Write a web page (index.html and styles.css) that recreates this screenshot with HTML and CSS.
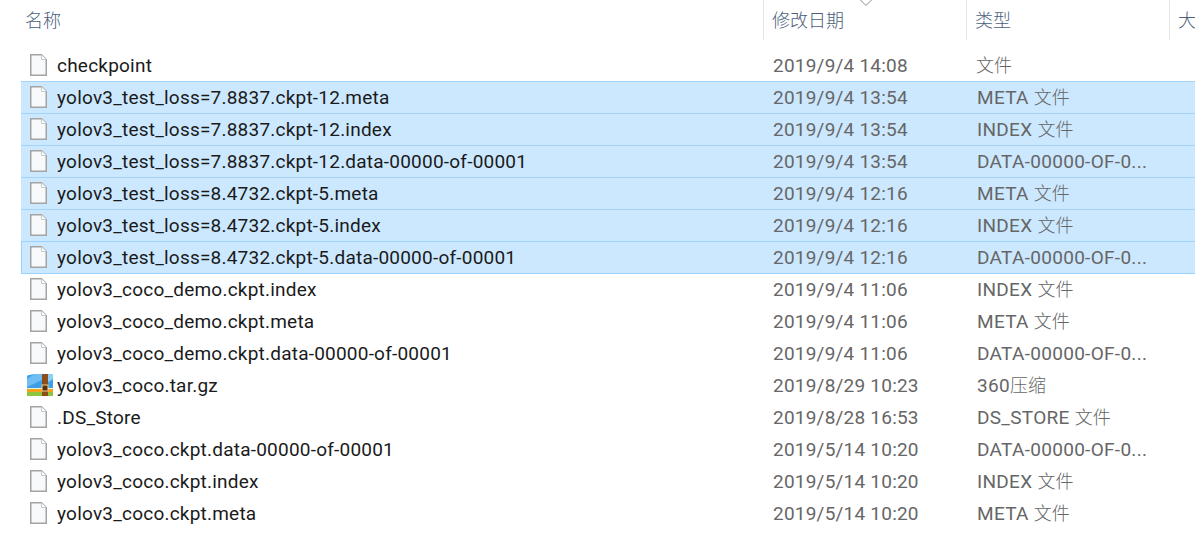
FILE: index.html
```html
<!DOCTYPE html>
<html lang="zh-CN">
<head>
  <meta charset="UTF-8">
  <title>文件列表</title>
  <link rel="stylesheet" href="styles.css">
</head>
<body>

<svg width="0" height="0" class="defs">
  <symbol id="file" viewBox="0 0 17 22">
    <path d="M.75.75H11.500L16.250 5.500V21.250H.75Z" fill="#f8f9fa" stroke="#a3a3a3" stroke-width="1.500"/>
    <path d="M11.500.75V5.500H16.250" fill="#fff" stroke="#c8c8c8"/>
  </symbol>
  <symbol id="archive" viewBox="0 0 26 22">
    <path d="M0 3Q0 1 2 1L8 0H26V14H0Z" fill="#3f9fe6"/>
    <path d="M0 5L8 0H15V6L0 13Z" fill="#6fbdf2"/>
    <path d="M18 0H26V5L20 9H18Z" fill="#8fd0f7"/>
    <rect y="14" width="26" height="1" fill="#e8f3d8"/>
    <rect y="15" width="26" height="3" fill="#f7a11a"/>
    <rect y="18" width="26" height="4" fill="#8cc63f"/>
    <rect x="15" width="6" height="22" fill="#8a4f1d"/>
    <rect x="15" y="11" width="6" height="6" fill="#5b3210" stroke="#f0cf8a"/>
  </symbol>
</svg>

<div class="header">
  <div class="col-name head-cell">名称</div>
  <div class="col-date head-cell with-line">
    修改日期
    <svg class="sort" width="14" height="7" viewBox="0 0 14 7"><path d="M1.500 0L7 5.500L12.500 0" fill="none" stroke="#8a8a8a"/></svg>
  </div>
  <div class="col-type head-cell with-line">类型</div>
  <div class="col-size head-cell with-line">大</div>
</div>

<div class="rows">
  <div class="row">
    <svg class="icon"><use href="#file"/></svg>
    <div class="name">checkpoint</div><div class="date">2019/9/4 14:08</div><div class="type plain"><span class="cjk">文件</span></div>
  </div>
  <div class="row sel">
    <svg class="icon"><use href="#file"/></svg>
    <div class="name">yolov3_test_loss=7.8837.ckpt-12.meta</div><div class="date">2019/9/4 13:54</div><div class="type">META <span class="cjk">文件</span></div>
  </div>
  <div class="row sel">
    <svg class="icon"><use href="#file"/></svg>
    <div class="name">yolov3_test_loss=7.8837.ckpt-12.index</div><div class="date">2019/9/4 13:54</div><div class="type">INDEX <span class="cjk">文件</span></div>
  </div>
  <div class="row sel">
    <svg class="icon"><use href="#file"/></svg>
    <div class="name">yolov3_test_loss=7.8837.ckpt-12.data-00000-of-00001</div><div class="date">2019/9/4 13:54</div><div class="type">DATA-00000-OF-0...</div>
  </div>
  <div class="row sel">
    <svg class="icon"><use href="#file"/></svg>
    <div class="name">yolov3_test_loss=8.4732.ckpt-5.meta</div><div class="date">2019/9/4 12:16</div><div class="type">META <span class="cjk">文件</span></div>
  </div>
  <div class="row sel">
    <svg class="icon"><use href="#file"/></svg>
    <div class="name">yolov3_test_loss=8.4732.ckpt-5.index</div><div class="date">2019/9/4 12:16</div><div class="type">INDEX <span class="cjk">文件</span></div>
  </div>
  <div class="row sel focus">
    <svg class="icon"><use href="#file"/></svg>
    <div class="name">yolov3_test_loss=8.4732.ckpt-5.data-00000-of-00001</div><div class="date">2019/9/4 12:16</div><div class="type">DATA-00000-OF-0...</div>
  </div>
  <div class="row">
    <svg class="icon"><use href="#file"/></svg>
    <div class="name">yolov3_coco_demo.ckpt.index</div><div class="date">2019/9/4 11:06</div><div class="type">INDEX <span class="cjk">文件</span></div>
  </div>
  <div class="row">
    <svg class="icon"><use href="#file"/></svg>
    <div class="name">yolov3_coco_demo.ckpt.meta</div><div class="date">2019/9/4 11:06</div><div class="type">META <span class="cjk">文件</span></div>
  </div>
  <div class="row">
    <svg class="icon"><use href="#file"/></svg>
    <div class="name">yolov3_coco_demo.ckpt.data-00000-of-00001</div><div class="date">2019/9/4 11:06</div><div class="type">DATA-00000-OF-0...</div>
  </div>
  <div class="row">
    <svg class="icon wide"><use href="#archive"/></svg>
    <div class="name">yolov3_coco.tar.gz</div><div class="date">2019/8/29 10:23</div><div class="type">360<span class="cjk">压缩</span></div>
  </div>
  <div class="row">
    <svg class="icon"><use href="#file"/></svg>
    <div class="name">.DS_Store</div><div class="date">2019/8/28 16:53</div><div class="type">DS_STORE <span class="cjk">文件</span></div>
  </div>
  <div class="row">
    <svg class="icon"><use href="#file"/></svg>
    <div class="name">yolov3_coco.ckpt.data-00000-of-00001</div><div class="date">2019/5/14 10:20</div><div class="type">DATA-00000-OF-0...</div>
  </div>
  <div class="row">
    <svg class="icon"><use href="#file"/></svg>
    <div class="name">yolov3_coco.ckpt.index</div><div class="date">2019/5/14 10:20</div><div class="type">INDEX <span class="cjk">文件</span></div>
  </div>
  <div class="row">
    <svg class="icon"><use href="#file"/></svg>
    <div class="name">yolov3_coco.ckpt.meta</div><div class="date">2019/5/14 10:20</div><div class="type">META <span class="cjk">文件</span></div>
  </div>
</div>

</body>
</html>
```

FILE: styles.css
```css
html, body {
  margin: 0;
  height: 549px;
  overflow: hidden;
  background: #fff;
}
body {
  font-family: Roboto, "Noto Sans CJK SC", sans-serif;
  font-size: 19px;
  color: #1a1a1a;
}
.defs {
  display: block;
  height: 0;
}
.header {
  display: flex;
  height: 40px;
  color: #4c607a;
  font-size: 18px;
  font-weight: 300;
}
.head-cell {
  position: relative;
  box-sizing: border-box;
  line-height: 42px;
  flex: none;
}
.col-name {
  width: 763px;
  padding-left: 25px;
}
.col-date {
  width: 203px;
  padding-left: 8px;
}
.col-type {
  width: 203px;
  padding-left: 8px;
}
.col-size {
  width: 26px;
  padding-left: 8px;
}
.with-line {
  border-left: 1px solid #e5e5e5;
}
.sort {
  position: absolute;
  left: 95px;
  top: 0;
}
.rows {
  margin-top: 9px;
  padding-left: 21px;
}
.row {
  display: flex;
  align-items: center;
  box-sizing: border-box;
  height: 32px;
  line-height: 30px;
}
.sel {
  background: #cce8ff;
  border-top: 1px solid #a5d4fb;
  padding-bottom: 1px;
}
.sel + .row:not(.sel) {
  border-top: 1px solid #99d1ff;
  padding-bottom: 1px;
}
.focus {
  border-top-color: #99d1ff;
  box-shadow: inset 1px 0 0 #99d1ff;
}
.icon {
  flex: none;
  width: 17px;
  height: 22px;
  margin-left: 9px;
  margin-right: 10px;
}
.icon.wide {
  width: 26px;
  margin-left: 6px;
  margin-right: 4px;
}
.name, .date, .type {
  flex: none;
  padding-top: 2px;
}
.name {
  width: 716px;
  white-space: nowrap;
  letter-spacing: .22px;
}
.date {
  width: 204px;
  color: #666;
  letter-spacing: .22px;
}
.type {
  color: #666;
  letter-spacing: .3px;
}
.type.plain {
  margin-left: -1px;
}
.cjk {
  font-size: 18px;
  font-weight: 300;
  letter-spacing: 0;
}
```
